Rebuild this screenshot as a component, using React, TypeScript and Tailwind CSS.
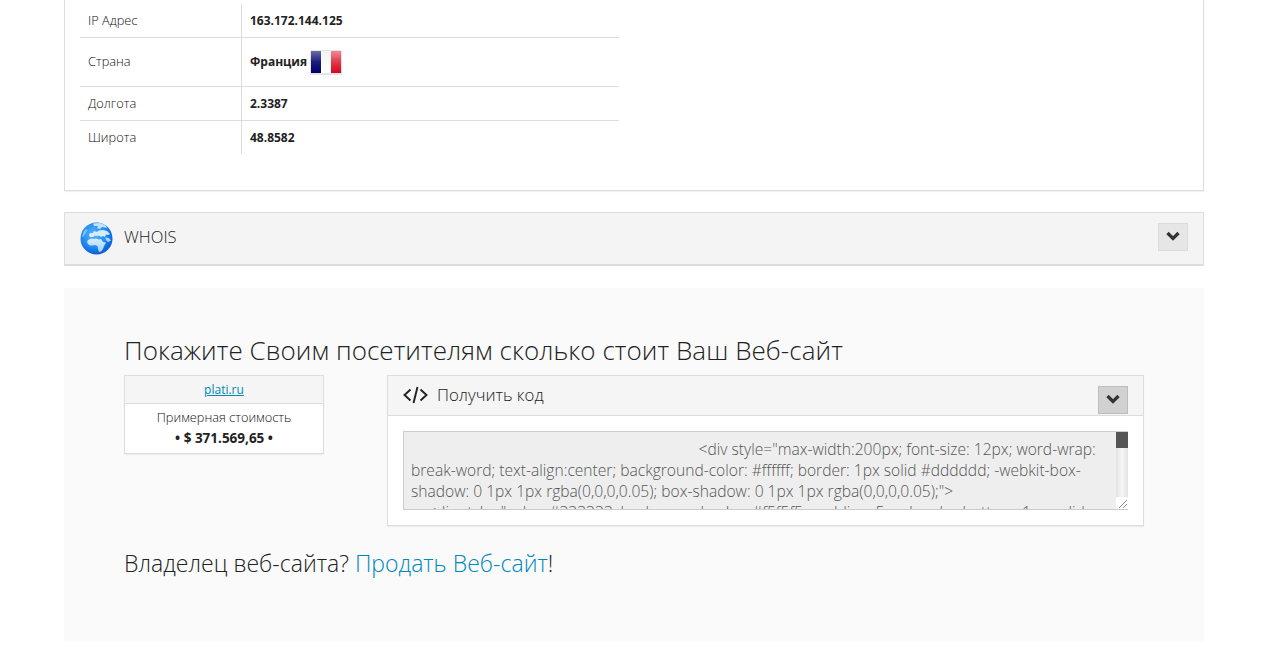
import React from "react";

const codeText =
  " ".repeat(71) +
  `<div style="max-width:200px; font-size: 12px; word-wrap: break-word; text-align:center; background-color: #ffffff; border: 1px solid #dddddd; -webkit-box-shadow: 0 1px 1px rgba(0,0,0,0.05); box-shadow: 0 1px 1px rgba(0,0,0,0.05);">
    <div style="color: #333333; background-color: #f5f5f5; padding: 5px; border-bottom: 1px solid #dddddd;">
        <a href="https://plati.ru" target="_blank">plati.ru</a>
    </div>
</div>`;

function Row({ label, value, h, last }: { label: string; value: React.ReactNode; h: string; last?: boolean }) {
  return (
    <div className={`flex ${h} ${last ? "" : "border-b border-[#dddddd]"}`}>
      <div className="w-[162px] shrink-0 border-r border-[#dddddd] pl-2 pb-[2px] flex items-center text-[12.8px] leading-[18px] font-light text-[#111]">
        {label}
      </div>
      <div className="pl-2 flex items-center text-[12px] font-bold text-[#222]">{value}</div>
    </div>
  );
}

function Flag() {
  return (
    <svg width="32" height="25" viewBox="0 0 32 25" className="ml-[3px]">
      <defs>
        <linearGradient id="fb" x1="0" y1="0" x2="0" y2="1">
          <stop offset="0" stopColor="#6b6ba8" />
          <stop offset="0.5" stopColor="#1c1c7c" />
          <stop offset="1" stopColor="#000066" />
        </linearGradient>
        <linearGradient id="fw" x1="0" y1="0" x2="0" y2="1">
          <stop offset="0" stopColor="#f4f4f4" />
          <stop offset="1" stopColor="#ffffff" />
        </linearGradient>
        <linearGradient id="fr" x1="0" y1="0" x2="0" y2="1">
          <stop offset="0" stopColor="#ee8a94" />
          <stop offset="0.5" stopColor="#e23a4c" />
          <stop offset="1" stopColor="#d4061f" />
        </linearGradient>
      </defs>
      <rect x="0" y="0" width="32" height="25" rx="1" fill="#e4e4e4" />
      <rect x="1" y="1" width="10" height="22" fill="url(#fb)" />
      <rect x="11" y="1" width="10" height="22" fill="url(#fw)" />
      <rect x="21" y="1" width="10" height="22" fill="url(#fr)" />
    </svg>
  );
}

function Globe() {
  return (
    <svg width="33" height="33" viewBox="0 0 33 33" className="shrink-0">
      <defs>
        <radialGradient id="sea" cx="0.42" cy="0.38" r="0.68">
          <stop offset="0" stopColor="#5cb6fb" />
          <stop offset="0.65" stopColor="#1a82ee" />
          <stop offset="1" stopColor="#0a50c8" />
        </radialGradient>
        <linearGradient id="land" x1="0" y1="0" x2="0" y2="1">
          <stop offset="0" stopColor="#d8eeff" />
          <stop offset="1" stopColor="#9ed0fb" />
        </linearGradient>
      </defs>
      <circle cx="16.5" cy="16.5" r="16" fill="url(#sea)" />
      <path d="M13 1.5 L20 1 L25 3 L27 6 L22 5 L20 7 L17 6 L18 4 L14 4 Z" fill="#bfe2fd" />
      <path
        d="M9 13 L10 11 L13 11 L14 9 L17 10 L19 8.5 L23 8 L27 9 L30 12 L28 13 L26 12.5 L25 15 L23 14 L21 15 L19 13.5 L17 14 L15 13.5 L13 15 L10 15 Z"
        fill="#d4ecff"
      />
      <path
        d="M7 20 L8 18 L11 16.5 L14 17 L16 16.5 L19 17.5 L21 17 L23 20 L26 20.5 L24 24 L23 27 L21 29.5 L19 30 L18 27 L17.5 24 L15 23 L13 23.5 L10 23.5 L8 22 Z"
        fill="url(#land)"
      />
      <path d="M25 15.5 L29 16 L31 18.5 L28 20 L26 18 Z" fill="#a6d5fc" />
      <path d="M2 15 L3.5 10 L6 7 L7.5 8 L6 11 L3.5 14.5 Z" fill="#7fc0f8" />
    </svg>
  );
}

function ChevronBtn({ dark }: { dark?: boolean }) {
  return (
    <div
      className={`w-[30px] h-[28px] flex items-center justify-center border ${
        dark ? "bg-[#d1d1d1] border-[#bdbdbd]" : "bg-[#e6e6e6] border-[#dbdbdb]"
      }`}
    >
      <svg width="14" height="10" viewBox="0 0 14 10" fill="none" stroke="#333" strokeWidth="3.2" className="-mt-[2px]">
        <path d="M1.5 2 L7 7.5 L12.5 2" />
      </svg>
    </div>
  );
}

export default function App() {
  return (
    <div
      className="h-[658px] overflow-hidden bg-white pl-16 text-[#333]"
      style={{ fontFamily: '"Open Sans", sans-serif' }}
    >
      <div className="w-[1140px]">
        <div className="h-[191px] border-x border-b border-[#dddddd] pl-[15px] pt-[4px] shadow-[0_1px_1px_rgba(0,0,0,0.05)]">
          <div className="w-[539px]">
            <Row label="IP Адрес" h="h-[34px]" value="163.172.144.125" />
            <Row
              label="Страна"
              h="h-[49px]"
              value={
                <>
                  Франция
                  <Flag />
                </>
              }
            />
            <Row label="Долгота" h="h-[34px]" value="2.3387" />
            <Row label="Широта" h="h-[33px]" last value="48.8582" />
          </div>
        </div>

        <div className="mt-[21px] h-[54px] border border-b-2 border-[#dddddd] bg-[#f4f4f4] flex items-start pt-[9px] pl-[15px] pr-[15px]">
          <Globe />
          <span className="ml-[11px] mt-[3px] text-[16.6px] leading-[24px] font-light text-[#222]">WHOIS</span>
          <div className="ml-auto mt-[1px]">
            <ChevronBtn />
          </div>
        </div>

        <div className="mt-[22px] h-[353px] bg-[#fafafa] px-[60px] pt-[42px]">
          <h2 className="text-[26px] tracking-[0.06px] leading-[40px] font-light text-[#222]">
            Покажите Своим посетителям сколько стоит Ваш Веб-сайт
          </h2>
          <div className="flex mt-[5px] items-start">
            <div className="w-[200px] h-[79px] border border-[#dddddd] bg-white text-center shadow-[0_1px_1px_rgba(0,0,0,0.05)]">
              <div className="h-[28px] bg-[#f5f5f5] border-b border-[#dddddd] flex items-center justify-center pt-[1px]">
                <a className="text-[12px] text-[#0088bb] underline font-normal" href="#">
                  plati.ru
                </a>
              </div>
              <div className="text-[12.8px] font-light text-[#111] leading-[16px] mt-[5px]">Примерная стоимость</div>
              <div className="text-[13.5px] font-bold text-[#222] leading-[18px] mt-[4px]">• $ 371.569,65 •</div>
            </div>
            <div className="ml-[63px] w-[757px] h-[151px] border border-[#dddddd] bg-white shadow-[0_1px_1px_rgba(0,0,0,0.05)]">
              <div className="h-[40px] bg-[#f5f5f5] border-b border-[#dddddd] flex items-start pl-[15px] pr-[15px]">
                <svg width="25" height="18" viewBox="0 0 25 18" fill="none" stroke="#222" strokeWidth="1.9" className="mt-[10px] shrink-0">
                  <path d="M7.5 3.5 L1.5 9 L7.5 14.5" />
                  <path d="M17.5 3.5 L23.5 9 L17.5 14.5" />
                  <path d="M14.5 1 L10.5 17" />
                </svg>
                <span className="ml-[9px] mt-[7px] text-[16.8px] leading-[24px] font-light text-[#222]">Получить код</span>
                <div className="ml-auto mt-[10px]">
                  <ChevronBtn dark />
                </div>
              </div>
              <div className="px-[15px] pt-[15px]">
                <div className="relative w-[725px] h-[79px]">
                  <textarea
                    readOnly
                    value={codeText}
                    className="block w-full h-full resize-none overflow-hidden bg-[#eeeeee] border border-[#cccccc] pl-[7px] pr-[22px] pt-[7px] pb-[5px] text-[15.6px] leading-[21px] font-light text-[#555] outline-none"
                  />
                  <div className="absolute right-0 top-[1px] bottom-[1px] w-[12px] flex flex-col">
                    <div className="h-[16px] bg-[#555555]" />
                    <div className="flex-1 bg-[linear-gradient(to_right,#e2e2e2,#f6f6f6,#e2e2e2)]" />
                    <div className="h-[12px] bg-white relative overflow-hidden">
                      <svg width="12" height="12" viewBox="0 0 12 12" stroke="#888" strokeWidth="1" fill="none">
                        <path d="M3 11 L11 3 M7 11 L11 7" />
                      </svg>
                    </div>
                  </div>
                </div>
              </div>
            </div>
          </div>
          <div className="mt-[19px] text-[23px] tracking-[0.02px] leading-[36px] font-light text-[#222]">
            Владелец веб-сайта? <a className="text-[#0088bb]" href="#">Продать Веб-сайт</a>!
          </div>
        </div>
      </div>
    </div>
  );
}
